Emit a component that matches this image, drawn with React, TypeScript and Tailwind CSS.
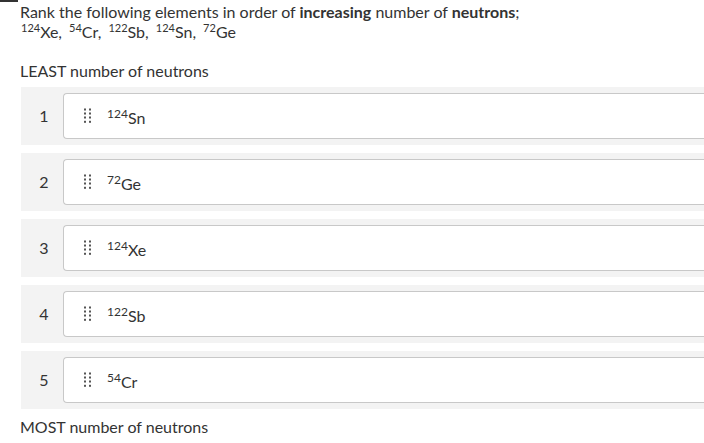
import React from "react";

type Isotope = { mass: string; symbol: string };

const items: Isotope[] = [
  { mass: "124", symbol: "Sn" },
  { mass: "72", symbol: "Ge" },
  { mass: "124", symbol: "Xe" },
  { mass: "122", symbol: "Sb" },
  { mass: "54", symbol: "Cr" },
];

const given: Isotope[] = [
  { mass: "124", symbol: "Xe" },
  { mass: "54", symbol: "Cr" },
  { mass: "122", symbol: "Sb" },
  { mass: "124", symbol: "Sn" },
  { mass: "72", symbol: "Ge" },
];

function Handle() {
  return (
    <svg width="9" height="16" viewBox="0 0 9 16" className="shrink-0">
      {[1.5, 5.5, 9.5, 13.8].map((cy) => (
        <g key={cy} fill="#555">
          <rect x="1" y={cy - 1} width="2" height="2" />
          <rect x="6" y={cy - 1} width="2" height="2" />
        </g>
      ))}
    </svg>
  );
}

export default function App() {
  return (
    <div
      className="relative h-[443px] w-[704px] overflow-hidden bg-white text-[#333]"
      style={{ fontFamily: "Lato, 'Open Sans', sans-serif" }}
    >
      <div className="absolute left-0 top-0 h-[2px] w-[18px] bg-[#333]" />

      <div className="pl-[20px] pt-[2px] text-[16px] leading-[20px]">
        <p>
          Rank the following elements in order of{" "}
          <b className="font-bold">increasing</b> number of{" "}
          <b className="font-bold">neutrons</b>;
        </p>
        <p>
          {given.map((g, i) => (
            <span key={i}>
              {i > 0 && ", "}
              <span
                className={
                  i > 0
                    ? "relative -top-[6px] ml-[3px] text-[11px] leading-none"
                    : "relative -top-[6px] ml-[1px] text-[11px] leading-none"
                }
              >
                {g.mass}
              </span>
              {g.symbol}
            </span>
          ))}
        </p>
      </div>

      <p className="mt-[19px] pl-[20px] text-[16px] leading-[20px]">
        LEAST number of neutrons
      </p>

      <div className="mt-[6px] flex flex-col gap-[8px] pl-[21px]">
        {items.map((it, i) => (
          <div key={i} className="flex h-[58px] items-center bg-[#f3f3f3] py-[6px]">
            <div className="flex w-[42px] shrink-0 justify-center pl-[4px] text-[16px]">
              {i + 1}
            </div>
            <div className="flex h-[46px] flex-1 items-center rounded-l-[4px] border border-r-0 border-[#c8c8c8] bg-white pl-[19px]">
              <Handle />
              <span className="ml-[15px] mt-[3px] text-[16px] leading-[20px]">
                <span className="relative -top-[6px] text-[12px] leading-none">
                  {it.mass}
                </span>
                {it.symbol}
              </span>
            </div>
          </div>
        ))}
      </div>

      <p className="mt-[8px] pl-[20px] text-[16px] leading-[20px]">
        MOST number of neutrons
      </p>
    </div>
  );
}
